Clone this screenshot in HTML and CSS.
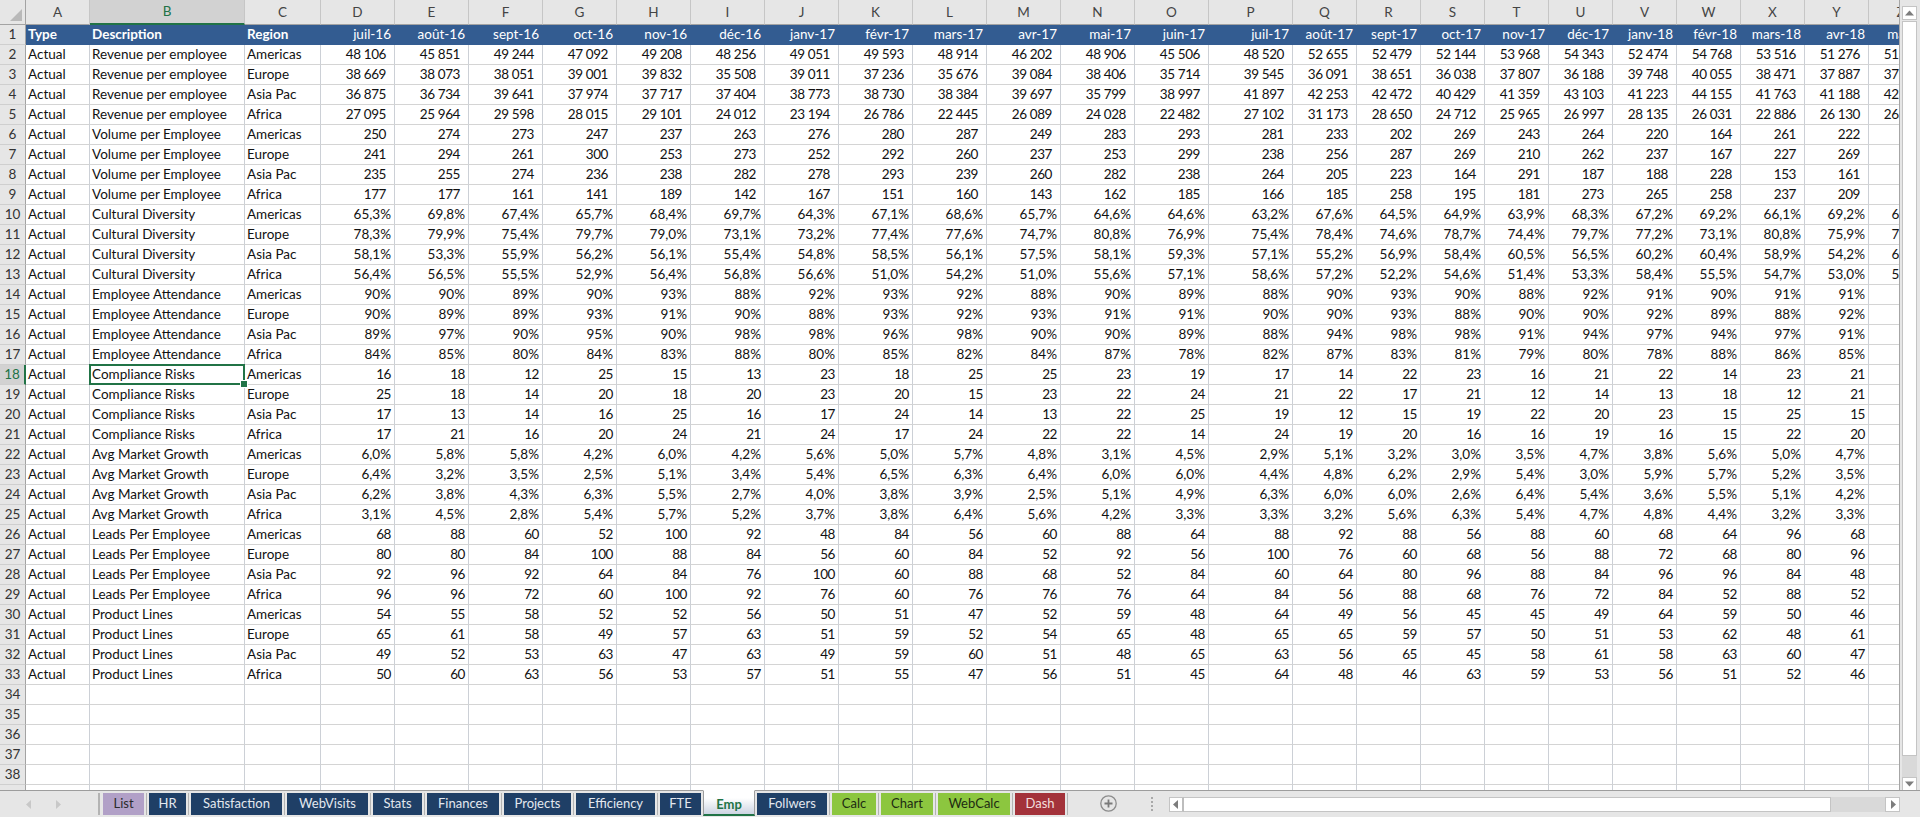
FILE: index.html
```html
<!DOCTYPE html>
<html lang="en">
<head>
<meta charset="utf-8">
<title>Emp</title>
<link rel="stylesheet" href="styles.css">
</head>
<body>
<div class="app">
<div class="main">
<div class="sheet">
<table class="grid">
<colgroup><col class="c-rn"><col class="c-a"><col class="c-b"><col class="c-c"><col class="c-d"><col class="c-d"><col class="c-d"><col class="c-d"><col class="c-d"><col class="c-d"><col class="c-d"><col class="c-d"><col class="c-d"><col class="c-d"><col class="c-d"><col class="c-d"><col class="c-p"><col class="c-q"><col class="c-q"><col class="c-q"><col class="c-q"><col class="c-q"><col class="c-q"><col class="c-q"><col class="c-q"><col class="c-q"><col class="c-q"></colgroup>
<thead><tr class="letters"><th class="corner"><span class="tri"></span><th>A<th class="on">B<th>C<th>D<th>E<th>F<th>G<th>H<th>I<th>J<th>K<th>L<th>M<th>N<th>O<th>P<th>Q<th>R<th>S<th>T<th>U<th>V<th>W<th>X<th>Y<th>Z</thead>
<tbody>
<tr class="head"><th>1<td class="l b">Type<td class="l b">Description<td class="l b">Region<td>juil-16<td>août-16<td>sept-16<td>oct-16<td>nov-16<td>déc-16<td>janv-17<td>févr-17<td>mars-17<td>avr-17<td>mai-17<td>juin-17<td>juil-17<td>août-17<td>sept-17<td>oct-17<td>nov-17<td>déc-17<td>janv-18<td>févr-18<td>mars-18<td>avr-18<td>mai-18
<tr class="pad"><th>2<td class="l">Actual<td class="l">Revenue per employee<td class="l">Americas<td>48 106<td>45 851<td>49 244<td>47 092<td>49 208<td>48 256<td>49 051<td>49 593<td>48 914<td>46 202<td>48 906<td>45 506<td>48 520<td>52 655<td>52 479<td>52 144<td>53 968<td>54 343<td>52 474<td>54 768<td>53 516<td>51 276<td>51 302
<tr class="pad"><th>3<td class="l">Actual<td class="l">Revenue per employee<td class="l">Europe<td>38 669<td>38 073<td>38 051<td>39 001<td>39 832<td>35 508<td>39 011<td>37 236<td>35 676<td>39 084<td>38 406<td>35 714<td>39 545<td>36 091<td>38 651<td>36 038<td>37 807<td>36 188<td>39 748<td>40 055<td>38 471<td>37 887<td>37 512
<tr class="pad"><th>4<td class="l">Actual<td class="l">Revenue per employee<td class="l">Asia Pac<td>36 875<td>36 734<td>39 641<td>37 974<td>37 717<td>37 404<td>38 773<td>38 730<td>38 384<td>39 697<td>35 799<td>38 997<td>41 897<td>42 253<td>42 472<td>40 429<td>41 359<td>43 103<td>41 223<td>44 155<td>41 763<td>41 188<td>42 214
<tr class="pad"><th>5<td class="l">Actual<td class="l">Revenue per employee<td class="l">Africa<td>27 095<td>25 964<td>29 598<td>28 015<td>29 101<td>24 012<td>23 194<td>26 786<td>22 445<td>26 089<td>24 028<td>22 482<td>27 102<td>31 173<td>28 650<td>24 712<td>25 965<td>26 997<td>28 135<td>26 031<td>22 886<td>26 130<td>26 408
<tr class="pad"><th>6<td class="l">Actual<td class="l">Volume per Employee<td class="l">Americas<td>250<td>274<td>273<td>247<td>237<td>263<td>276<td>280<td>287<td>249<td>283<td>293<td>281<td>233<td>202<td>269<td>243<td>264<td>220<td>164<td>261<td>222<td>
<tr class="pad"><th>7<td class="l">Actual<td class="l">Volume per Employee<td class="l">Europe<td>241<td>294<td>261<td>300<td>253<td>273<td>252<td>292<td>260<td>237<td>253<td>299<td>238<td>256<td>287<td>269<td>210<td>262<td>237<td>167<td>227<td>269<td>
<tr class="pad"><th>8<td class="l">Actual<td class="l">Volume per Employee<td class="l">Asia Pac<td>235<td>255<td>274<td>236<td>238<td>282<td>278<td>293<td>239<td>260<td>282<td>238<td>264<td>205<td>223<td>164<td>291<td>187<td>188<td>228<td>153<td>161<td>
<tr class="pad"><th>9<td class="l">Actual<td class="l">Volume per Employee<td class="l">Africa<td>177<td>177<td>161<td>141<td>189<td>142<td>167<td>151<td>160<td>143<td>162<td>185<td>166<td>185<td>258<td>195<td>181<td>273<td>265<td>258<td>237<td>209<td>
<tr><th>10<td class="l">Actual<td class="l">Cultural Diversity<td class="l">Americas<td>65,3%<td>69,8%<td>67,4%<td>65,7%<td>68,4%<td>69,7%<td>64,3%<td>67,1%<td>68,6%<td>65,7%<td>64,6%<td>64,6%<td>63,2%<td>67,6%<td>64,5%<td>64,9%<td>63,9%<td>68,3%<td>67,2%<td>69,2%<td>66,1%<td>69,2%<td>66,4%
<tr><th>11<td class="l">Actual<td class="l">Cultural Diversity<td class="l">Europe<td>78,3%<td>79,9%<td>75,4%<td>79,7%<td>79,0%<td>73,1%<td>73,2%<td>77,4%<td>77,6%<td>74,7%<td>80,8%<td>76,9%<td>75,4%<td>78,4%<td>74,6%<td>78,7%<td>74,4%<td>79,7%<td>77,2%<td>73,1%<td>80,8%<td>75,9%<td>76,2%
<tr><th>12<td class="l">Actual<td class="l">Cultural Diversity<td class="l">Asia Pac<td>58,1%<td>53,3%<td>55,9%<td>56,2%<td>56,1%<td>55,4%<td>54,8%<td>58,5%<td>56,1%<td>57,5%<td>58,1%<td>59,3%<td>57,1%<td>55,2%<td>56,9%<td>58,4%<td>60,5%<td>56,5%<td>60,2%<td>60,4%<td>58,9%<td>54,2%<td>60,1%
<tr><th>13<td class="l">Actual<td class="l">Cultural Diversity<td class="l">Africa<td>56,4%<td>56,5%<td>55,5%<td>52,9%<td>56,4%<td>56,8%<td>56,6%<td>51,0%<td>54,2%<td>51,0%<td>55,6%<td>57,1%<td>58,6%<td>57,2%<td>52,2%<td>54,6%<td>51,4%<td>53,3%<td>58,4%<td>55,5%<td>54,7%<td>53,0%<td>55,3%
<tr><th>14<td class="l">Actual<td class="l">Employee Attendance<td class="l">Americas<td>90%<td>90%<td>89%<td>90%<td>93%<td>88%<td>92%<td>93%<td>92%<td>88%<td>90%<td>89%<td>88%<td>90%<td>93%<td>90%<td>88%<td>92%<td>91%<td>90%<td>91%<td>91%<td>
<tr><th>15<td class="l">Actual<td class="l">Employee Attendance<td class="l">Europe<td>90%<td>89%<td>89%<td>93%<td>91%<td>90%<td>88%<td>93%<td>92%<td>93%<td>91%<td>91%<td>90%<td>90%<td>93%<td>88%<td>90%<td>90%<td>92%<td>89%<td>88%<td>92%<td>
<tr><th>16<td class="l">Actual<td class="l">Employee Attendance<td class="l">Asia Pac<td>89%<td>97%<td>90%<td>95%<td>90%<td>98%<td>98%<td>96%<td>98%<td>90%<td>90%<td>89%<td>88%<td>94%<td>98%<td>98%<td>91%<td>94%<td>97%<td>94%<td>97%<td>91%<td>
<tr><th>17<td class="l">Actual<td class="l">Employee Attendance<td class="l">Africa<td>84%<td>85%<td>80%<td>84%<td>83%<td>88%<td>80%<td>85%<td>82%<td>84%<td>87%<td>78%<td>82%<td>87%<td>83%<td>81%<td>79%<td>80%<td>78%<td>88%<td>86%<td>85%<td>
<tr class="cur tight"><th>18<td class="l">Actual<td class="l sel">Compliance Risks<td class="l">Americas<td>16<td>18<td>12<td>25<td>15<td>13<td>23<td>18<td>25<td>25<td>23<td>19<td>17<td>14<td>22<td>23<td>16<td>21<td>22<td>14<td>23<td>21<td>
<tr class="tight"><th>19<td class="l">Actual<td class="l">Compliance Risks<td class="l">Europe<td>25<td>18<td>14<td>20<td>18<td>20<td>23<td>20<td>15<td>23<td>22<td>24<td>21<td>22<td>17<td>21<td>12<td>14<td>13<td>18<td>12<td>21<td>
<tr class="tight"><th>20<td class="l">Actual<td class="l">Compliance Risks<td class="l">Asia Pac<td>17<td>13<td>14<td>16<td>25<td>16<td>17<td>24<td>14<td>13<td>22<td>25<td>19<td>12<td>15<td>19<td>22<td>20<td>23<td>15<td>25<td>15<td>
<tr class="tight"><th>21<td class="l">Actual<td class="l">Compliance Risks<td class="l">Africa<td>17<td>21<td>16<td>20<td>24<td>21<td>24<td>17<td>24<td>22<td>22<td>14<td>24<td>19<td>20<td>16<td>16<td>19<td>16<td>15<td>22<td>20<td>
<tr><th>22<td class="l">Actual<td class="l">Avg Market Growth<td class="l">Americas<td>6,0%<td>5,8%<td>5,8%<td>4,2%<td>6,0%<td>4,2%<td>5,6%<td>5,0%<td>5,7%<td>4,8%<td>3,1%<td>4,5%<td>2,9%<td>5,1%<td>3,2%<td>3,0%<td>3,5%<td>4,7%<td>3,8%<td>5,6%<td>5,0%<td>4,7%<td>
<tr><th>23<td class="l">Actual<td class="l">Avg Market Growth<td class="l">Europe<td>6,4%<td>3,2%<td>3,5%<td>2,5%<td>5,1%<td>3,4%<td>5,4%<td>6,5%<td>6,3%<td>6,4%<td>6,0%<td>6,0%<td>4,4%<td>4,8%<td>6,2%<td>2,9%<td>5,4%<td>3,0%<td>5,9%<td>5,7%<td>5,2%<td>3,5%<td>
<tr><th>24<td class="l">Actual<td class="l">Avg Market Growth<td class="l">Asia Pac<td>6,2%<td>3,8%<td>4,3%<td>6,3%<td>5,5%<td>2,7%<td>4,0%<td>3,8%<td>3,9%<td>2,5%<td>5,1%<td>4,9%<td>6,3%<td>6,0%<td>6,0%<td>2,6%<td>6,4%<td>5,4%<td>3,6%<td>5,5%<td>5,1%<td>4,2%<td>
<tr><th>25<td class="l">Actual<td class="l">Avg Market Growth<td class="l">Africa<td>3,1%<td>4,5%<td>2,8%<td>5,4%<td>5,7%<td>5,2%<td>3,7%<td>3,8%<td>6,4%<td>5,6%<td>4,2%<td>3,3%<td>3,3%<td>3,2%<td>5,6%<td>6,3%<td>5,4%<td>4,7%<td>4,8%<td>4,4%<td>3,2%<td>3,3%<td>
<tr class="tight"><th>26<td class="l">Actual<td class="l">Leads Per Employee<td class="l">Americas<td>68<td>88<td>60<td>52<td>100<td>92<td>48<td>84<td>56<td>60<td>88<td>64<td>88<td>92<td>88<td>56<td>88<td>60<td>68<td>64<td>96<td>68<td>
<tr class="tight"><th>27<td class="l">Actual<td class="l">Leads Per Employee<td class="l">Europe<td>80<td>80<td>84<td>100<td>88<td>84<td>56<td>60<td>84<td>52<td>92<td>56<td>100<td>76<td>60<td>68<td>56<td>88<td>72<td>68<td>80<td>96<td>
<tr class="tight"><th>28<td class="l">Actual<td class="l">Leads Per Employee<td class="l">Asia Pac<td>92<td>96<td>92<td>64<td>84<td>76<td>100<td>60<td>88<td>68<td>52<td>84<td>60<td>64<td>80<td>96<td>88<td>84<td>96<td>96<td>84<td>48<td>
<tr class="tight"><th>29<td class="l">Actual<td class="l">Leads Per Employee<td class="l">Africa<td>96<td>96<td>72<td>60<td>100<td>92<td>76<td>60<td>76<td>76<td>76<td>64<td>84<td>56<td>88<td>68<td>76<td>72<td>84<td>52<td>88<td>52<td>
<tr class="tight"><th>30<td class="l">Actual<td class="l">Product Lines<td class="l">Americas<td>54<td>55<td>58<td>52<td>52<td>56<td>50<td>51<td>47<td>52<td>59<td>48<td>64<td>49<td>56<td>45<td>45<td>49<td>64<td>59<td>50<td>46<td>
<tr class="tight"><th>31<td class="l">Actual<td class="l">Product Lines<td class="l">Europe<td>65<td>61<td>58<td>49<td>57<td>63<td>51<td>59<td>52<td>54<td>65<td>48<td>65<td>65<td>59<td>57<td>50<td>51<td>53<td>62<td>48<td>61<td>
<tr class="tight"><th>32<td class="l">Actual<td class="l">Product Lines<td class="l">Asia Pac<td>49<td>52<td>53<td>63<td>47<td>63<td>49<td>59<td>60<td>51<td>48<td>65<td>63<td>56<td>65<td>45<td>58<td>61<td>58<td>63<td>60<td>47<td>
<tr class="tight"><th>33<td class="l">Actual<td class="l">Product Lines<td class="l">Africa<td>50<td>60<td>63<td>56<td>53<td>57<td>51<td>55<td>47<td>56<td>51<td>45<td>64<td>48<td>46<td>63<td>59<td>53<td>56<td>51<td>52<td>46<td>
<tr><th>34<td><td><td><td><td><td><td><td><td><td><td><td><td><td><td><td><td><td><td><td><td><td><td><td><td><td><td>
<tr><th>35<td><td><td><td><td><td><td><td><td><td><td><td><td><td><td><td><td><td><td><td><td><td><td><td><td><td><td>
<tr><th>36<td><td><td><td><td><td><td><td><td><td><td><td><td><td><td><td><td><td><td><td><td><td><td><td><td><td><td>
<tr><th>37<td><td><td><td><td><td><td><td><td><td><td><td><td><td><td><td><td><td><td><td><td><td><td><td><td><td><td>
<tr><th>38<td><td><td><td><td><td><td><td><td><td><td><td><td><td><td><td><td><td><td><td><td><td><td><td><td><td><td>
<tr><th><td><td><td><td><td><td><td><td><td><td><td><td><td><td><td><td><td><td><td><td><td><td><td><td><td><td><td>
</tbody>
</table>
</div>
<div class="vscroll">
<div class="sbtn"><svg width="9" height="6" viewBox="0 0 9 6"><path d="M4.5 0.5 9 5.5H0z"/></svg></div>
<div class="vthumb"></div>
<div class="vtrack"></div>
<div class="sbtn"><svg width="9" height="6" viewBox="0 0 9 6"><path d="M4.5 5.5 9 .5H0z"/></svg></div>
</div>
</div>
<div class="bar">
<div class="nav">
<svg class="nav-arrow" width="6" height="9" viewBox="0 0 6 9"><path d="M5 0v9L0 4.5z"/></svg>
<svg class="nav-arrow" width="6" height="9" viewBox="0 0 6 9"><path d="M1 0v9l5-4.5z"/></svg>
</div>
<div class="tabs">
<div class="tab purple w-list">List</div>
<div class="tab navy w-hr">HR</div>
<div class="tab navy w-sat">Satisfaction</div>
<div class="tab navy w-web">WebVisits</div>
<div class="tab navy w-stats">Stats</div>
<div class="tab navy w-fin">Finances</div>
<div class="tab navy w-proj">Projects</div>
<div class="tab navy w-eff">Efficiency</div>
<div class="tab navy w-fte">FTE</div>
<div class="tab active w-emp">Emp</div>
<div class="tab navy w-fol">Follwers</div>
<div class="tab green w-calc">Calc</div>
<div class="tab green w-chart">Chart</div>
<div class="tab green w-wcalc">WebCalc</div>
<div class="tab red w-dash">Dash</div>
</div>
<svg class="plus" width="17" height="17" viewBox="0 0 17 17"><circle cx="8.5" cy="8.5" r="7.7" fill="none" stroke="#8c8c8c" stroke-width="1.3"/><path d="M8.5 4.5v8M4.5 8.5h8" stroke="#7a7a7a" stroke-width="1.8"/></svg>
<div class="dots"><i></i><i></i><i></i><i></i></div>
<div class="hscroll">
<div class="hbtn lft"><svg width="6" height="9" viewBox="0 0 6 9"><path d="M5 0v9L0 4.5z"/></svg></div>
<div class="hthumb"></div>
<div class="htrack"></div>
<div class="hbtn"><svg width="6" height="9" viewBox="0 0 6 9"><path d="M1 0v9l5-4.5z"/></svg></div>
</div>
</div>
</div>
</body>
</html>
```
FILE: styles.css
```css
* { box-sizing: border-box; }
html, body { margin: 0; height: 100%; overflow: hidden; }
body { font-family: Lato, "Open Sans", sans-serif; color: #111; background: #e6e6e6; }
.app { display: flex; flex-direction: column; height: 817px; width: 1920px; }
.main { display: flex; height: 790px; }
.sheet { width: 1900px; height: 790px; overflow: hidden; border-right: 1px solid #a6a6a6; background: #fff; }

.grid { border-collapse: separate; border-spacing: 0; table-layout: fixed; width: 2022px; font-size: 13.5px; }
.c-rn { width: 26px; }
.c-a { width: 64px; }
.c-b { width: 155px; }
.c-c { width: 76px; }
.c-d { width: 74px; }
.c-p { width: 84px; }
.c-q { width: 64px; }

.grid td, .grid th { padding: 0; height: 20px; line-height: 19px; white-space: nowrap; font-weight: 400; }
.grid td { text-align: right; padding-right: 3px; border-right: 1px solid #ccd0d6; border-bottom: 1px solid #d4d4d4; }
.grid td.l { text-align: left; padding: 0 0 0 2px; letter-spacing: 0; word-spacing: 0; }
.grid tr.pad td:not(.l) { padding-right: 8px; letter-spacing: -.4px; }
.grid tr.tight td:not(.l) { letter-spacing: -.4px; }

.grid tbody th { background: #e6e6e6; color: #333; text-align: center; border-right: 1px solid #a3a3a3; border-bottom: 1px solid #cfcfcf; }
.letters th { height: 24px; background: #e6e6e6; color: #444; text-align: center; border-right: 1px solid #c6c6c6; border-bottom: 1px solid #a3a3a3; line-height: 23px; }
.letters th.on { background: #d2d2d2; color: #217346; border-bottom: 2px solid #217346; }
.letters th.corner { position: relative; border-right-color: #a3a3a3; }
.tri { position: absolute; right: 3px; bottom: 3px; width: 12px; height: 12px; background: #b9b9b9; clip-path: polygon(100% 0, 100% 100%, 0 100%); }

.head td { background: #335c91; color: #fff; border-right-color: #335c91; border-bottom-color: #335c91; }
.head td.b { font-weight: 700; }

.grid tbody .cur th { background: #d2d2d2; color: #217346; border-right: 2px solid #217346; }
.grid td.sel { position: relative; }
.sel::before { content: ""; position: absolute; left: -1px; top: -1px; right: -1px; bottom: -1px; border: 2px solid #217346; }
.sel::after { content: ""; position: absolute; right: -3px; bottom: -3px; width: 6px; height: 6px; background: #217346; border: 1px solid #fff; box-sizing: content-box; margin: -1px; }

.vscroll { width: 20px; display: flex; flex-direction: column; padding: 6px 3px 0 2px; }
.sbtn { height: 14px; background: #fff; border: 1px solid #c4c4c4; display: flex; align-items: center; justify-content: center; flex: none; }
.sbtn path, .hbtn path { fill: #7d7d7d; }
.vthumb { height: 735px; margin-top: 1px; background: #fff; border: 1px solid #c4c4c4; flex: none; }
.vtrack { height: 21px; background: #d9d9d9; flex: none; }

.bar { height: 27px; display: flex; align-items: flex-start; border-top: 1px solid #9d9d9d; position: relative; }
.nav { width: 100px; height: 22px; margin-top: 2px; display: flex; align-items: center; justify-content: flex-start; gap: 23px; padding-left: 26px; border-right: 2px solid #b3b3b3; flex: none; }
.nav-arrow path { fill: #c8c8c8; }
.tabs { display: flex; margin-left: 1px; flex: none; }
.tab { height: 22px; margin-top: 2px; line-height: 21px; font-size: 13px; text-align: center; position: relative; flex: none; margin-left: 5px; }
.tab:first-child { margin-left: 2px; }
.tab::after { content: ""; position: absolute; right: -3px; top: 0; bottom: 0; width: 1px; background: #b3b3b3; }
.purple { background: #b1a0c7; color: #2b2b2b; }
.navy { background: #1f3f66; color: #e3e8ef; }
.green { background: #8cc63f; color: #1d2b12; }
.red { background: #a3323a; color: #f2dede; }
.active { margin-top: -1px; height: 26px; margin-left: 2px; line-height: 27px; font-weight: 700; color: #217346; background: linear-gradient(#fff 30%, #cdd4e2); border: 1px solid #9d9d9d; border-top-color: #fff; border-bottom: 2px solid #217346; }
.active + .tab { margin-left: 2px; }
.active::after, .tab:has(+ .active)::after { display: none; }
.w-list { width: 41px; } .w-hr { width: 37px; } .w-sat { width: 91px; } .w-web { width: 81px; } .w-stats { width: 49px; }
.w-fin { width: 72px; } .w-proj { width: 67px; } .w-eff { width: 79px; } .w-fte { width: 41px; } .w-emp { width: 52px; }
.w-fol { width: 70px; } .w-calc { width: 44px; } .w-chart { width: 52px; } .w-wcalc { width: 72px; } .w-dash { width: 50px; }

.plus { margin: 4px 0 0 35px; flex: none; }
.dots { margin: 6px 0 0 34px; width: 3px; display: flex; flex-direction: column; gap: 2px; flex: none; }
.dots i { width: 2px; height: 2px; background: #a8a8a8; display: block; }
.hscroll { margin: 6px 0 0 15px; height: 15px; width: 731px; display: flex; flex: none; }
.hbtn { width: 15px; background: #fff; border: 1px solid #c4c4c4; display: flex; align-items: center; justify-content: center; flex: none; }
.hbtn.lft { border-right: 2px solid #bdbdbd; }
.hthumb { width: 647px; background: #fff; border: 1px solid #c4c4c4; border-left: 0; flex: none; }
.htrack { width: 54px; background: #d9d9d9; flex: none; }
```
